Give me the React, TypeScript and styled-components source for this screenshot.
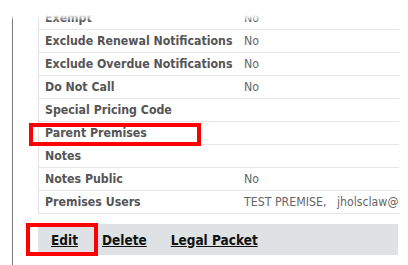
import * as React from 'react';
import styled, { createGlobalStyle } from 'styled-components';

const GlobalStyle = createGlobalStyle`
  html, body {
    margin: 0;
    padding: 0;
    background: #fff;
    overflow: hidden;
  }
  body {
    font-family: 'DejaVu Sans Condensed', Tahoma, 'DejaVu Sans', sans-serif;
    font-size: 12.25px;
  }
`;

const Page = styled.div`
  position: relative;
  width: 408px;
  height: 265px;
  overflow: hidden;

  &::before {
    content: '';
    position: absolute;
    left: 0;
    top: 0;
    right: 0;
    height: 21px;
    background: linear-gradient(#fff 0px, #fff 15px, rgba(255, 255, 255, 0.5) 18px, rgba(255, 255, 255, 0) 21px);
    z-index: 2;
  }
`;

const Panel = styled.div`
  margin: -5px 0 0 12px;
  padding: 6px 10px 6px 25px;
  border-left: 1px solid #777;
  height: 300px;
`;

const Table = styled.div`
  width: 360px;
  margin-top: 6px;
  border-left: 1px solid #e3e3e3;
`;

const Row = styled.div`
  position: relative;
  display: grid;
  grid-template-columns: 199px 1fr;
  height: 22px;
  border-bottom: 1px solid #e6e6e6;
  align-items: center;
`;

const Label = styled.div`
  padding-left: 6px;
  font-weight: bold;
  color: #555;
  white-space: nowrap;
`;

const Value = styled.div`
  padding-left: 6px;
  color: #666;
  white-space: pre;
  overflow: hidden;
`;

const Highlight = styled.div<{ $left: number; $top: number; $w: number; $h: number }>`
  position: absolute;
  left: ${(p) => p.$left}px;
  top: ${(p) => p.$top}px;
  width: ${(p) => p.$w}px;
  height: ${(p) => p.$h}px;
  box-sizing: border-box;
  border: 4px solid #f00;
  pointer-events: none;
`;

const Actions = styled.div`
  position: relative;
  display: flex;
  align-items: center;
  gap: 24px;
  width: 360px;
  height: 31px;
  margin-top: 10px;
  padding-left: 13px;
  box-sizing: border-box;
  background: #dfe2e5;
`;

const ActionLink = styled.a`
  font-weight: bold;
  font-size: 13.5px;
  color: #111;
  text-decoration: underline;
  cursor: pointer;
`;

const rows: Array<[string, string, boolean?]> = [
  ['Exempt', 'No'],
  ['Exclude Renewal Notifications', 'No'],
  ['Exclude Overdue Notifications', 'No'],
  ['Do Not Call', 'No'],
  ['Special Pricing Code', ''],
  ['Parent Premises', '', true],
  ['Notes', ''],
  ['Notes Public', 'No'],
  ['Premises Users', 'TEST PREMISE,   jholsclaw@example.com'],
];

export default function App() {
  return (
    <>
      <GlobalStyle />
      <Page>
        <Panel>
          <Table>
            {rows.map(([label, value, marked]) => (
              <Row key={label}>
                <Label>{label}</Label>
                <Value>{value}</Value>
                {marked && <Highlight $left={-10} $top={1} $w={172} $h={23} />}
              </Row>
            ))}
          </Table>
          <Actions>
            <ActionLink>Edit</ActionLink>
            <ActionLink>Delete</ActionLink>
            <ActionLink>Legal Packet</ActionLink>
            <Highlight $left={-12} $top={-1} $w={72} $h={33} />
          </Actions>
        </Panel>
      </Page>
    </>
  );
}
